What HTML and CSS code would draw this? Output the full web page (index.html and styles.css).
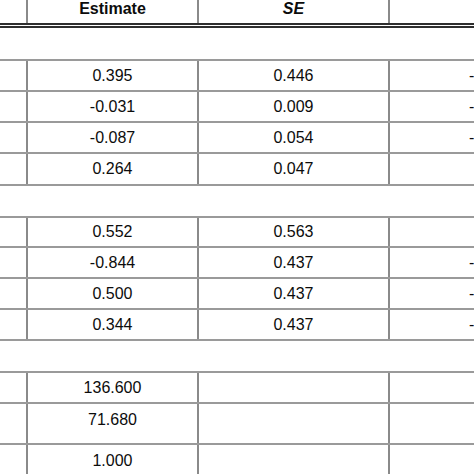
FILE: index.html
```html
<!DOCTYPE html>
<html lang="en">
<head>
<meta charset="utf-8">
<title>Estimates</title>
<link rel="stylesheet" href="styles.css">
</head>
<body>
<div class="table">
  <div class="row head">
    <div class="cell"></div>
    <div class="cell"><b>Estimate</b></div>
    <div class="cell"><b><i>SE</i></b></div>
    <div class="cell c4"></div>
  </div>
  <div class="gap first"></div>
  <div class="row">
    <div class="cell"></div><div class="cell">0.395</div><div class="cell">0.446</div><div class="cell c4">-</div>
  </div>
  <div class="row">
    <div class="cell"></div><div class="cell">-0.031</div><div class="cell">0.009</div><div class="cell c4">-</div>
  </div>
  <div class="row">
    <div class="cell"></div><div class="cell">-0.087</div><div class="cell">0.054</div><div class="cell c4">-</div>
  </div>
  <div class="row r32">
    <div class="cell"></div><div class="cell">0.264</div><div class="cell">0.047</div><div class="cell c4"></div>
  </div>
  <div class="gap"></div>
  <div class="row r30">
    <div class="cell"></div><div class="cell">0.552</div><div class="cell">0.563</div><div class="cell c4"></div>
  </div>
  <div class="row">
    <div class="cell"></div><div class="cell">-0.844</div><div class="cell">0.437</div><div class="cell c4">-</div>
  </div>
  <div class="row">
    <div class="cell"></div><div class="cell">0.500</div><div class="cell">0.437</div><div class="cell c4">-</div>
  </div>
  <div class="row">
    <div class="cell"></div><div class="cell">0.344</div><div class="cell">0.437</div><div class="cell c4">-</div>
  </div>
  <div class="gap"></div>
  <div class="row">
    <div class="cell"></div><div class="cell">136.600</div><div class="cell"></div><div class="cell c4"></div>
  </div>
  <div class="row tall">
    <div class="cell"></div><div class="cell">71.680</div><div class="cell"></div><div class="cell c4"></div>
  </div>
  <div class="row last">
    <div class="cell"></div><div class="cell">1.000</div><div class="cell"></div><div class="cell c4"></div>
  </div>
</div>
</body>
</html>
```
FILE: styles.css
```css
html, body {
  margin: 0;
  padding: 0;
  background: #ffffff;
  overflow: hidden;
}

body {
  width: 474px;
  height: 474px;
  font-family: "Liberation Sans", Arial, sans-serif;
  font-size: 16px;
  line-height: 18px;
  color: #0c0c0c;
}

.table {
  width: 474px;
  height: 474px;
  overflow: hidden;
}

.row {
  display: grid;
  grid-template-columns: 28px 171px 191px 1fr;
  box-sizing: border-box;
  height: 31px;
  border-bottom: 2px solid #9a9a9a;
}

.row.r32 { height: 32px; }
.row.r30 { height: 30px; }
.row.tall { height: 41px; }
.row.last { height: 29px; border-bottom: none; }

.row.head {
  height: 28px;
  border-bottom: 5px double #2e2e2e;
}

.cell {
  display: flex;
  align-items: center;
  justify-content: center;
  box-sizing: border-box;
  border-right: 2px solid #8a8a8a;
  white-space: nowrap;
}

.cell.c4 {
  justify-content: flex-start;
  padding-left: 79px;
  border-right: none;
  overflow: hidden;
}

.head .cell {
  align-items: flex-start;
}

.tall .cell,
.last .cell {
  align-items: flex-start;
  padding-top: 7px;
}

.gap {
  box-sizing: border-box;
  height: 32px;
  border-bottom: 2px solid #9a9a9a;
}

.gap.first { height: 33px; }
```
